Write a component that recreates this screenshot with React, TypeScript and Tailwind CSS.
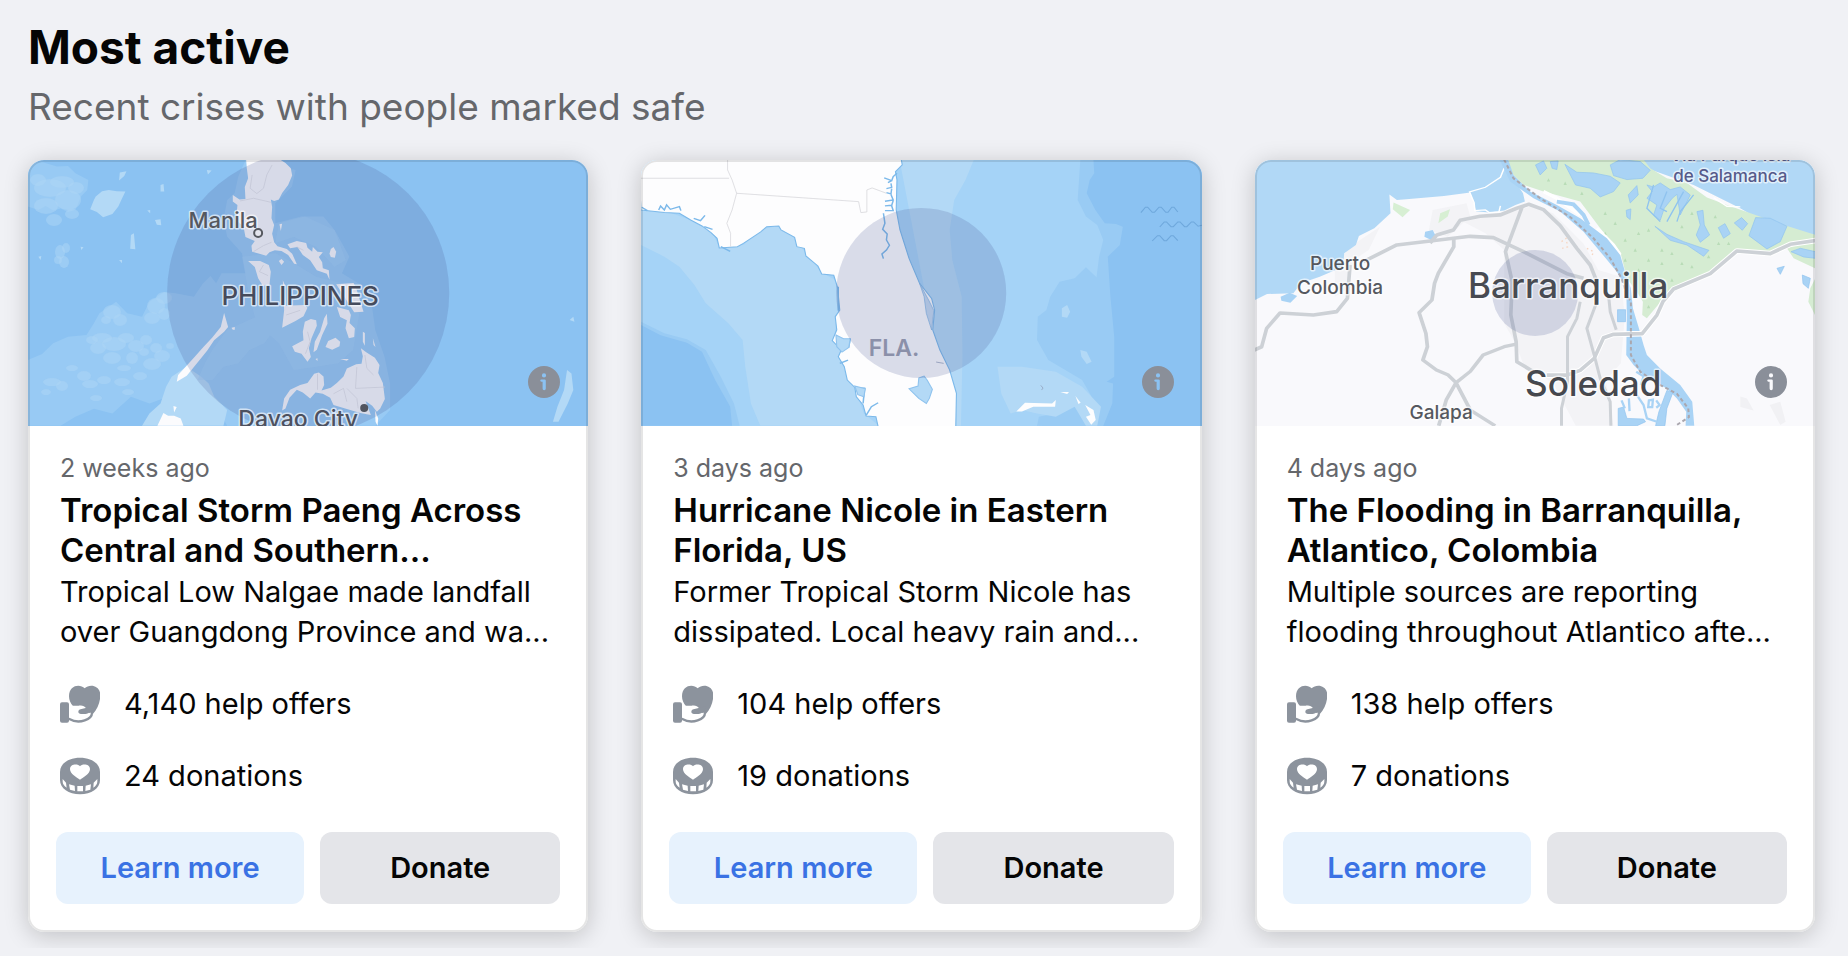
import type { ReactNode } from "react";

const labelFont = "Inter, 'Noto Sans', sans-serif";

type MapLabelProps = {
  x: number;
  y: number;
  size: number;
  fill?: string;
  halo?: string;
  weight?: number;
  children: string;
};

function MapLabel({ x, y, size, fill = "#55585f", halo = "#ffffffa0", weight = 500, children }: MapLabelProps) {
  return (
    <text
      x={x}
      y={y}
      fontSize={size}
      fontFamily={labelFont}
      fontWeight={weight}
      fill={fill}
      stroke={halo}
      strokeWidth={3}
      strokeLinejoin="round"
      paintOrder="stroke"
      textAnchor="middle"
    >
      {children}
    </text>
  );
}

function AffectedArea({ r }: { r: number }) {
  return <circle cx={280} cy={133} r={r} fill="#4c5b98" fillOpacity={0.2} />;
}

function MapFrame({ title, children }: { title: string; children: ReactNode }) {
  return (
    <svg
      viewBox="0 0 560 266"
      preserveAspectRatio="xMidYMid slice"
      className="block h-full w-full"
      role="img"
      aria-label={title}
    >
      {children}
    </svg>
  );
}

// reefs and shoals: x, y, rx, ry
const shoals = [
  [22, 28, 16, 9], [40, 40, 13, 10], [18, 46, 12, 8], [34, 22, 12, 6], [48, 28, 8, 6], [10, 20, 8, 6], [26, 60, 8, 6], [44, 54, 7, 5],
  [32, 92, 5, 7], [36, 102, 5, 6], [30, 100, 4, 4], [38, 88, 4, 5],
  [84, 152, 9, 7], [92, 160, 7, 6], [78, 160, 5, 4], [74, 178, 10, 5], [86, 184, 12, 7], [70, 188, 8, 6], [98, 178, 8, 5],
  [84, 198, 9, 6], [108, 186, 8, 6], [104, 198, 6, 6], [118, 180, 6, 5], [116, 192, 5, 4], [96, 208, 7, 3], [64, 180, 6, 4],
  [128, 146, 9, 8], [136, 138, 8, 6], [124, 158, 8, 6], [136, 154, 6, 6], [128, 188, 6, 5], [134, 196, 8, 6], [124, 204, 9, 6],
  [24, 222, 9, 4], [34, 226, 6, 5], [18, 232, 5, 3], [56, 216, 7, 5], [62, 224, 8, 4], [76, 220, 7, 4], [94, 222, 8, 4], [44, 208, 6, 3],
  [100, 232, 6, 3], [68, 238, 6, 3], [112, 216, 7, 4], [142, 186, 4, 3],
];

function PhilippinesMap() {
  return (
    <MapFrame title="Map of the Philippines">
      <rect width="560" height="266" fill="#8bc2f2" />
      {/* shallow water */}
      <g transform="scale(0.37 0.33333) translate(-22 -30)">
        <path
          fill="#98caf4"
          d="M22 40 L60 36 L100 50 L130 48 L150 70 L185 90 L182 120 L165 140 L158 160 L150 180 L130 186 L110 176 L90 182 L70 168 L50 180 L22 170Z M22 630 L60 612 L90 580 L130 560 L180 555 L200 520 L215 490 L260 455 L290 490 L330 500 L350 455 L370 440 L390 426 L420 430 L470 440 L495 400 L515 378 L530 400 L545 370 L610 370 L600 310 L560 260 L550 210 L560 150 L580 130 L590 80 L610 30 L745 60 L735 110 L690 160 L690 220 L760 200 L820 200 L850 240 L870 280 L890 320 L870 370 L930 410 L950 460 L960 540 L985 620 L1000 700 L1000 780 L960 827 L560 827 L500 700 L440 690 L420 720 L400 740 L350 760 L300 740 L250 790 L200 776 L150 800 L110 827 L22 827Z"
        />
        <path
          fill="#b3d9f6"
          d="M190 178 L200 150 L205 140 L222 124 L240 120 L262 124 L285 125 L275 148 L266 170 L250 192 L225 202 L208 186Z M330 827 L350 790 L380 760 L395 710 L410 680 L450 650 L490 680 L510 700 L525 740 L560 780 L550 827Z M1440 815 L1452 770 L1470 720 L1478 660 L1490 670 L1495 720 L1480 760 L1455 815Z M1485 510 L1495 500 L1498 515Z M505 60 L518 62 L508 74Z M380 105 L388 102 L390 125 L380 125Z M270 68 L288 64 L282 78 L268 92Z M365 210 L380 208 L382 226 L370 224Z M300 255 L308 250 L312 298 L298 296Z M50 320 L58 318 L56 330Z M164 290 L172 292 L166 300Z M344 182 L352 180 L352 190Z M268 330 L276 330 L276 340Z"
        />
        <path
          fill="#a3d0f5"
          fillOpacity="0.55"
          d="M480 690 L500 640 L520 600 L560 540 L600 520 L640 500 L690 510 L680 550 L660 580 L620 600 L590 640 L550 650 L520 690Z M690 280 L700 220 L770 200 L850 240 L880 330 L850 350 L800 290 L740 260Z M600 320 L690 310 L740 340 L800 380 L870 400 L920 470 L900 600 L860 640 L800 650 L740 660 L700 580 L640 520 L620 440Z"
        />
      </g>
      <g fill="#aed6f6" fillOpacity="0.5">
        {shoals.map(([cx, cy, rx, ry]) => (
          <ellipse key={`${cx}-${cy}`} cx={cx} cy={cy} rx={rx} ry={ry} />
        ))}
      </g>
      {/* islands */}
      <g transform="translate(172 -5) scale(0.33333)">
        <g fill="#fbfbfd">
          <path d="M138 14 L240 14 L256 24 L272 40 L276 62 L264 90 L246 114 L236 134 L222 138 L212 134 L216 156 L214 190 L222 210 L216 236 L222 262 L232 274 L260 282 L276 296 L290 328 L282 326 L264 300 L244 288 L224 286 L208 292 L198 302 L178 296 L156 290 L154 272 L164 258 L136 246 L130 214 L108 196 L112 150 L98 140 L98 120 L118 134 L136 132 L134 96 L144 70 L140 40Z" />
          <path d="M262 268 L290 258 L318 264 L322 278 L336 290 L338 276 L352 290 L368 292 L356 306 L366 322 L368 340 L386 346 L388 374 L380 356 L350 346 L330 316 L308 300 L292 276 L270 280Z" />
          <path d="M392 282 L400 276 L408 290 L404 308 L392 306 L388 296Z" />
          <path d="M144 318 L180 318 L206 330 L212 350 L208 390 L188 392 L174 370 L164 336Z" />
          <path d="M236 318 L244 312 L252 320 L244 330Z M238 208 L246 206 L242 228Z" />
          <path d="M248 376 L254 390 L256 452 L312 450 L322 458 L310 484 L286 498 L246 518 L252 466Z" />
          <path d="M408 388 L460 384 L468 400 L490 470 L462 472 L448 450 L416 400Z" />
          <path d="M410 456 L446 466 L452 480 L448 504 L464 520 L462 546 L446 550 L436 520 L440 496 L420 486Z" />
          <path d="M314 500 L332 492 L348 496 L350 512 L334 550 L326 580 L332 606 L322 620 L304 596 L284 590 L276 574 L310 556 L308 530Z" />
          <path d="M380 476 L382 506 L366 540 L350 584 L340 592 L344 560 L360 530 L372 490Z" />
          <path d="M376 576 L384 558 L406 548 L420 560 L418 574 L396 584Z" />
          <path d="M488 530 L494 534 L494 572 L488 560Z M518 550 L526 576 L520 570Z M346 612 L352 610 L352 618Z M420 612 L446 612 L440 617Z M94 518 L104 516 L104 524 L98 524Z" />
          <path d="M72 474 L84 516 L72 530 L42 556 L22 586 L4 608 L-40 662 L-70 680 L-66 660 L-20 610 L10 576 L36 548 L62 516Z" />
          <path d="M482 580 L498 592 L524 608 L538 630 L534 654 L548 684 L554 732 L540 760 L530 770 L516 752 L496 738 L512 780 L480 774 L400 750 L390 728 L368 716 L346 712 L330 730 L308 712 L290 704 L268 728 L256 760 L246 766 L252 730 L270 704 L300 690 L322 684 L342 656 L356 652 L370 664 L372 690 L364 706 L392 698 L410 684 L430 664 L440 640 L468 628 L484 626 L488 604Z" />
          <path d="M524 765 L534 790 L532 812 L526 800Z M-80 753 L-70 756 L-78 772Z" />
          <path d="M-128 812 L-110 774 L-96 782 L-78 782 L-58 790 L-50 812Z" />
        </g>
        <g fill="none" stroke="#dcdde2" strokeWidth="2">
          <path d="M156 60 L150 100 L170 116 L190 100 L200 60 L216 30 M120 138 L160 130 L212 142 M160 290 L190 272 L214 262 M190 330 L178 350 L204 362 M258 480 L300 466 M316 596 L330 560 L322 530 M352 656 L352 704 M470 636 L466 700 L554 696 M440 700 L470 730 L474 760 M400 716 L430 700 L440 740 M290 276 L310 286 M494 600 L500 640 L520 660" />
        </g>
      </g>
      <AffectedArea r={141} />
      <MapLabel x={195} y={68} size={22}>Manila</MapLabel>
      <circle cx={230} cy={73} r={4} fill="#e4e5ee" stroke="#55585f" strokeWidth={2} />
      <MapLabel x={272} y={145} size={26} fill="#464b5c">PHILIPPINES</MapLabel>
      <MapLabel x={270} y={267} size={23} fill="#4d515f">Davao City</MapLabel>
      <circle cx={336} cy={248} r={4} fill="#50545f" />
    </MapFrame>
  );
}

function FloridaMap() {
  return (
    <MapFrame title="Map of Florida">
      <rect width="560" height="266" fill="#a5d3f7" />
      <g transform="scale(0.37622 0.33333) translate(-28 -30)">
        {/* deep water on the east */}
        <path
          fill="#99cbf4"
          d="M1195 30 L1520 30 L1520 830 L1160 830 L1080 827 L1085 800 L1130 790 L1100 760 L1180 720 L1225 740 L1200 690 L1110 630 L1080 570 L1082 500 L1105 480 L1115 440 L1140 395 L1180 385 L1210 352 L1238 382 L1245 320 L1256 270 L1240 225 L1210 200 L1188 150Z"
        />
        <path
          fill="#8bc2f2"
          d="M1230 30 L1520 30 L1520 830 L1255 830 L1280 760 L1282 700 L1265 695 L1285 680 L1285 560 L1275 440 L1268 320 L1300 285 L1308 230 L1290 222 L1260 220 L1235 180 L1212 130 L1220 90 L1232 70Z"
        />
        <path
          fill="#b3d9f6"
          d="M715 30 L912 30 L890 90 L860 150 L848 240 L855 330 L880 440 L882 620 L878 827 L850 827Z"
        />
        <path
          fill="#b3d9f6"
          d="M975 650 L1040 650 L1130 665 L1200 710 L1250 770 L1240 827 L1210 827 L1180 770 L1130 800 L1080 790 L1040 780 L1010 790 L985 730Z M1146 475 L1160 465 L1168 485 L1160 503 L1146 500Z M1195 600 L1212 605 L1225 635 L1212 642 L1198 620Z"
        />
        {/* gulf */}
        <path
          fill="#b3d9f6"
          d="M28 180 L100 186 L160 210 L215 240 L235 290 L300 285 L345 240 L400 225 L435 260 L465 310 L510 370 L545 390 L552 500 L540 560 L575 650 L620 790 L660 827 L28 827Z"
        />
        <path
          fill="#a5d3f7"
          d="M28 285 L90 320 L130 350 L170 405 L200 460 L260 520 L298 570 L305 650 L320 760 L345 827 L28 827Z"
        />
        <path fill="#99cbf4" d="M28 515 L90 550 L150 568 L200 600 L240 680 L275 760 L290 827 L28 827Z" />
        <path fill="#8bc2f2" d="M28 525 L80 556 L150 578 L190 605 L225 690 L265 770 L270 827 L28 827Z" />
        {/* land */}
        <path
          fill="#fdfdfe"
          stroke="#7cb9ea"
          strokeWidth="3"
          d="M20 20 L718 20 L722 45 L704 65 L708 90 L706 180 L716 240 L740 325 L768 400 L800 445 L808 480 L803 540 L822 600 L848 660 L866 730 L864 840 L660 840 L652 800 L626 798 L618 765 L600 740 L596 712 L576 690 L568 650 L552 620 L560 600 L536 572 L548 540 L544 500 L556 480 L550 412 L540 376 L508 372 L498 348 L466 318 L462 295 L442 290 L436 262 L400 240 L394 228 L362 230 L346 246 L300 280 L284 290 L236 294 L230 265 L214 248 L190 228 L160 210 L130 190 L90 188 L28 180Z"
        />
        <g fill="none" stroke="#7cb9ea" strokeWidth="4">
          <path d="M30 172 L45 182 M75 180 L80 168 L90 180 L96 165 L106 178 L130 170 L134 182 M168 205 L186 212 L198 196 M196 230 L218 238 M240 290 L265 304" />
          <path d="M708 70 L698 80 L694 92 L674 84 M694 92 L684 98 M692 100 L694 112 L680 116 M694 116 L692 132 L680 128 M692 134 L698 150 L676 154 M698 152 L694 166 L676 168 M694 168 L698 182 L676 182" />
          <path d="M672 190 L676 220 L670 238 L682 252 L680 270 L688 286 L680 300 L668 312 L672 326" />
          <path d="M552 410 L552 482 M560 600 L552 576 L580 590 L584 566 M556 640 L578 630 M598 714 L622 714 L618 760 M626 796 L640 770 L658 758" />
        </g>
        <path fill="#b3d9f6" stroke="#8fc3ee" strokeWidth="3" d="M546 555 L566 566 L584 566 L580 592 L562 606 L548 590Z M596 708 L624 716 L620 740 L604 734Z M766 684 L780 678 L788 690 L802 718 L794 745 L786 760 L766 745 L740 716 L764 708Z" />
        <path fill="#c5daf0" stroke="#82b6e4" strokeWidth="2" d="M768 400 L780 440 L786 490 L800 540 L806 482 L792 450Z" />
        <path fill="#fdfdfe" d="M1025 784 L1048 758 L1120 760 L1130 750 L1128 770 L1070 770 L1040 784Z M1142 726 L1165 726 L1160 732Z M1182 738 L1196 758 L1190 762Z M1208 765 L1230 780 L1236 810 L1224 824 L1210 800 L1222 795Z" />
        {/* state lines */}
        <g fill="none" stroke="#d3d3d8" strokeWidth="2">
          <path d="M28 85 L262 85 M258 30 L258 60 L270 90 L282 130 L606 155 L612 188 L628 186 L628 120 L642 114 L680 130 M282 130 L270 180 L256 220 L266 250 L266 290" />
          <path d="M812 636 L832 640 M1090 706 L1096 714 L1092 720" stroke="#8d9bb5" />
        </g>
        {/* waves */}
        <g fill="none" stroke="#6fa8dc" strokeWidth="3">
          <path d="M1356 188 L1368 172 L1374 172 L1386 187 L1392 187 L1404 172 L1410 172 L1422 187 L1428 187 L1438 172 L1444 172 L1454 186" />
          <path d="M1406 231 L1418 216 L1424 216 L1436 230 L1442 230 L1454 216 L1460 216 L1472 230 L1478 230 L1490 216 L1496 216 L1508 229 L1518 226" />
          <path d="M1386 273 L1400 257 L1406 257 L1418 272 L1424 272 L1436 257 L1442 257 L1454 272" />
        </g>
      </g>
      <AffectedArea r={85} />
      <MapLabel x={253} y={196} size={23} fill="#8b90a9" halo="none" weight={600}>FLA.</MapLabel>
    </MapFrame>
  );
}

function BarranquillaMap() {
  return (
    <MapFrame title="Map of Barranquilla">
      <rect width="560" height="266" fill="#f9f9fc" />
      <g transform="scale(0.37622 0.33333) translate(-28 -30)">
        {/* urban area */}
        <path
          fill="#f3f3f6"
          d="M580 215 L700 190 L760 170 L820 190 L900 280 L940 360 L1000 380 L1010 500 L1000 640 L960 690 L980 827 L880 827 L820 700 L740 640 L720 580 L690 520 L690 300 L640 250Z M280 290 L360 230 L330 300 L290 330 L270 420 L240 440 L240 350Z M500 180 L590 160 L600 200 L540 260 L490 240Z"
        />
        {/* sea */}
        <path
          fill="#b1d8f6"
          d="M28 30 L690 30 L700 60 L740 130 L745 155 L720 165 L690 182 L650 188 L615 184 L610 160 L600 128 L530 138 L430 148 L405 150 L385 134 L388 190 L345 235 L304 258 L296 285 L265 310 L262 350 L200 380 L150 400 L130 430 L60 432 L28 450Z"
        />
        <path fill="none" stroke="#fff" strokeWidth="4" d="M690 54 L680 82 L640 112 L598 126 L610 158 L612 182 L640 180 L650 188 L676 186 L680 168" />
        <path fill="#a9d3f5" d="M96 440 L120 428 L140 438 L122 458 L98 452Z M480 245 L500 240 L510 262 L496 270 L478 260Z" />
        <path fill="#d7efd3" d="M396 158 L440 180 L420 202 L394 178Z M520 190 L546 178 L540 200 L515 220Z" />
      </g>
      <g transform="translate(225 -5) scale(0.33333)">
        {/* coast and park */}
        <path fill="#b1d8f6" d="M60 14 L1005 14 L1005 240 L900 230 L780 160 L640 90 L500 40 L300 14Z" />
        <path
          fill="#d5ecd2"
          d="M84 14 L490 14 L510 40 L560 70 L620 84 L680 128 L740 150 L830 182 L880 200 L930 216 L1005 240 L1005 250 L920 275 L870 296 L770 290 L700 350 L600 400 L550 430 L500 490 L486 480 L488 440 L470 410 L440 370 L420 290 L360 220 L300 140 L190 110 L130 90 L90 50Z"
        />
        <path fill="#d5ecd2" d="M920 280 L1005 252 L1005 340 L940 310Z M990 400 L1005 370 L1005 482 L984 440Z" />
        <g fill="#a9d3f5" stroke="#8fc3ef" strokeWidth="2">
          <path d="M254 28 L290 52 L340 54 L390 64 L420 84 L400 110 L360 126 L330 100 L286 90Z" />
          <path d="M390 30 L420 14 L480 20 L510 46 L488 70 L440 74 L400 62Z" />
          <path d="M166 30 L190 18 L200 40 L180 60Z M210 20 L234 18 L230 44 L216 40Z M444 120 L470 92 L474 120 L450 144Z M438 166 L452 162 L450 194 L440 186Z" />
          <path d="M500 90 L516 110 L500 130 L530 150 L520 180 L540 196 L552 160 L576 130 L590 118 L600 180 L630 120 L600 96 L570 104 L540 84 L520 96Z" />
          <path d="M650 170 L668 166 L672 210 L688 240 L660 262 L648 240 L660 210Z M714 218 L734 206 L750 236 L730 250Z M762 204 L784 188 L802 206 L786 226Z" />
          <path d="M826 188 L870 190 L920 214 L900 260 L860 282 L806 242Z M524 214 L560 238 L610 260 L686 286 L670 304 L620 270 L570 256Z" />
          <path d="M932 290 L960 280 L1005 290 L1005 310 L970 306Z M890 340 L912 334 L900 358Z M966 360 L990 370 L984 400 L968 386Z" />
        </g>
        <g fill="none" stroke="#8fc3ef" strokeWidth="4">
          <path d="M520 90 L500 160 L540 200 M560 110 L540 160 L560 170 M610 110 L560 200 M640 120 L600 170 L590 200" />
          <path d="M700 128 L740 154 L780 156" stroke="#fff" />
        </g>
        <g fill="#b9dcb7">
          <path d="M300 120h10l-5 -10z M370 180h10l-5 -10z M400 210h10l-5 -10z M370 240h10l-5 -10z M430 260h10l-5 -10z M460 290h10l-5 -10z M430 320h10l-5 -10z M500 320h10l-5 -10z M540 330h10l-5 -10z M570 300h10l-5 -10z M600 330h10l-5 -10z M630 340h10l-5 -10z M470 240h10l-5 -10z M500 230h10l-5 -10z M540 290h10l-5 -10z M600 220h10l-5 -10z M630 180h10l-5 -10z M700 190h10l-5 -10z M710 270h10l-5 -10z M740 270h10l-5 -10z M510 390h10l-5 -10z M570 380h10l-5 -10z M500 460h10l-5 -10z M250 90h10l-5 -10z M200 80h10l-5 -10z M470 350h10l-5 -10z M680 310h10l-5 -10z" />
        </g>
        {/* river */}
        <path
          fill="none"
          stroke="#fff"
          strokeWidth="10"
          d="M190 110 L230 130 L300 180 M350 220 L400 270 L420 300"
        />
        <path
          fill="#a9d3f5"
          d="M58 14 L84 14 L100 60 L150 110 L230 150 L300 190 L380 250 L420 300 L440 370 L452 400 L458 460 L476 520 L490 570 L500 600 L540 640 L600 690 L636 740 L642 812 L616 812 L618 770 L590 730 L560 700 L500 670 L460 630 L438 600 L440 480 L438 400 L410 350 L360 290 L310 230 L240 170 L160 130 L90 80Z"
        />
        <path fill="none" stroke="#a9d3f5" strokeWidth="12" d="M230 140 L280 148 L310 180 L325 210" />
        <path fill="#a9d3f5" stroke="#8fc3ef" strokeWidth="2" d="M412 464 L436 464 L436 500 L412 500Z M560 706 L578 712 L560 760 L554 812 L526 812 L536 770Z M414 760 L430 756 L440 790 L490 792 L496 800 L470 812 L414 812Z" />
        <path fill="none" stroke="#a9d3f5" strokeWidth="7" d="M424 736 L434 760 M446 730 L448 768 M468 650 L490 664 L482 690 M470 720 L490 750 L500 790 L530 800 M506 736 L518 734 L516 756 L504 756Z M528 736 L538 750 L528 758" />
        {/* roads */}
        <g fill="none" stroke="#fff" strokeWidth="17" strokeLinejoin="round">
          <path d="M1010 256 L930 268 L870 296 L770 288 L690 356 L580 402 L548 440 L530 480 L486 536 L400 538 L370 548 L342 610 L300 646 L262 660 L200 660" />
        </g>
        <g fill="none" stroke="#cdd1d6" strokeWidth="11" strokeLinejoin="round">
          <path d="M1010 256 L930 268 L870 296 L770 288 L690 356 L580 402 L548 440 L530 480 L486 536 L400 538 L370 548 L342 610 L300 646 L262 660 L200 660" />
          <path d="M-150 264 L-130 240 L-80 225 L-60 196 L0 184 L60 180 L110 160 L146 148 L190 164 L240 212 L290 280 L330 330 L350 380 M126 156 L76 290 L96 380 L92 480 L108 560 L110 620 L160 650" />
          <path d="M-680 586 L-655 575 L-640 520 L-600 474 L-500 480 L-430 470 L-398 430 L-390 330 M-350 320 L-250 270 L-30 244 L40 248 L130 290 L260 356 L310 370" />
          <path d="M350 440 L320 520 L342 600 L360 670 L390 740 L392 812 M300 440 L290 490 L262 545 L262 680 L244 760 L244 812 M385 420 L390 470 L408 524" strokeWidth="9" />
        </g>
        <path fill="none" stroke="#aaa7ae" strokeWidth="6" strokeDasharray="11 8" d="M72 14 L100 70 L180 130 L270 186 L340 250 L390 310 L424 370 L440 420 L452 440 L452 600 L480 650 L540 690 L590 716 L624 760 L626 786 L586 812" />
        <path fill="none" stroke="#f6d7c4" strokeWidth="4" strokeDasharray="5 9" d="M244 260 L258 250 L262 276 L246 280 M320 280 L340 290 L336 300" />
        <path fill="#f1f1f4" d="M780 724 L800 730 L820 766 L780 756Z M868 750 L900 740 L916 800 L900 810Z" />
      </g>
      <g transform="scale(0.37622 0.33333) translate(-28 -30)">
        <path
          fill="none"
          stroke="#cdd1d6"
          strokeWidth="10"
          strokeLinejoin="round"
          d="M556 262 L556 290 L515 370 L505 400 L498 450 L464 488 L482 550 L486 590 L474 630 L510 660 L540 674 L562 698 L600 664 L634 615 L690 590 L722 582 M562 698 L536 750 L516 827 M562 698 L600 780 L666 827"
        />
      </g>
      <AffectedArea r={43} />
      <MapLabel x={475} y={1} size={17} fill="#565a8a">Vía Parque Isla</MapLabel>
      <MapLabel x={475} y={22} size={17} fill="#565a8a">de Salamanca</MapLabel>
      <MapLabel x={85} y={110} size={19}>Puerto</MapLabel>
      <MapLabel x={85} y={134} size={19}>Colombia</MapLabel>
      <MapLabel x={313} y={138} size={35} fill="#484b52">Barranquilla</MapLabel>
      <MapLabel x={338} y={236} size={35} fill="#46484e">Soledad</MapLabel>
      <MapLabel x={186} y={259} size={19}>Galapa</MapLabel>
    </MapFrame>
  );
}

function InfoIcon() {
  return (
    <svg viewBox="0 0 32 32" className="h-8 w-8" aria-hidden="true">
      <path
        fill="#8a8f99"
        fillRule="evenodd"
        d="M16 0a16 16 0 1 1 0 32a16 16 0 0 1 0-32Z M16 7.3a2.1 2.1 0 1 0 0 4.2a2.1 2.1 0 0 0 0-4.2Z M13.4 13.4a1 1 0 0 0 0 2.3H14.6V22.6a1.6 1.6 0 0 0 3.2 0V14.6a1.2 1.2 0 0 0-1.2-1.2Z"
      />
    </svg>
  );
}

function HelpIcon() {
  return (
    <svg viewBox="30 43 120 120" className="h-10 w-10 shrink-0" fill="#8c939d" aria-hidden="true">
      <path d="M104 56 C90 42 57 46 57 80 C57 92 62 101 68 108 L128 134 C144 118 151 94 151 76 C150 46 118 42 104 56Z" />
      <path fill="#fff" d="M60 110 C68 107 78 109 86 108 C98 107 108 112 108 118 C104 121 92 118 86 124 C83 130 90 134 98 134 C108 135 116 134 124 128 C122 142 108 150 92 150 C78 151 68 148 60 145Z" />
      <path d="M104 116 C96 119 86 118 85 126 C85 134 98 133 106 133 C118 132 126 124 128 110Z" />
      <path fill="none" stroke="#8c939d" strokeWidth="7" strokeLinecap="round" d="M58 148 C72 156 90 157 104 152 C116 148 126 140 126 129" />
      <rect x="30" y="98" width="27" height="61" rx="6" />
    </svg>
  );
}

function DonationIcon() {
  return (
    <svg viewBox="30 258 120 120" className="h-10 w-10 shrink-0" fill="#8c939d" aria-hidden="true">
      <path d="M90 263 C124 263 150 280 150 306 L150 330 C150 355 124 373 90 373 C56 373 30 355 30 330 L30 306 C30 280 56 263 90 263Z" />
      <path fill="#fff" d="M90 289 C84 281 60 281 60 298 C60 311 80 323 90 329 C100 323 120 311 120 298 C120 281 96 281 90 289Z" />
      <path fill="#fff" d="M38 327 L48 338 L50 353 C43 348 38 342 38 335Z M57 343 L74 347 L75 363 L60 359Z M82 348 H99 V364 H82Z M107 347 L123 343 L121 359 L106 363Z M131 338 L142 327 L142 335 C142 342 137 348 130 353Z" />
    </svg>
  );
}

const crises = [
  {
    id: "paeng",
    map: <PhilippinesMap />,
    time: "2 weeks ago",
    title: "Tropical Storm Paeng Across Central and Southern...",
    description: "Tropical Low Nalgae made landfall over Guangdong Province and wa...",
    offers: "4,140 help offers",
    donations: "24 donations",
  },
  {
    id: "nicole",
    map: <FloridaMap />,
    time: "3 days ago",
    title: "Hurricane Nicole in Eastern Florida, US",
    description: "Former Tropical Storm Nicole has dissipated. Local heavy rain and...",
    offers: "104 help offers",
    donations: "19 donations",
  },
  {
    id: "barranquilla",
    map: <BarranquillaMap />,
    time: "4 days ago",
    title: "The Flooding in Barranquilla, Atlantico, Colombia",
    description: "Multiple sources are reporting flooding throughout Atlantico afte...",
    offers: "138 help offers",
    donations: "7 donations",
  },
];

function CrisisCard({ crisis }: { crisis: (typeof crises)[number] }) {
  return (
    <article className="relative overflow-hidden rounded-2xl bg-white shadow-[0_4px_24px_rgba(0,0,0,0.2)]">
      <div className="relative h-[266px]">
        {crisis.map}
        <button type="button" aria-label="Map information" className="absolute right-7 bottom-7">
          <InfoIcon />
        </button>
      </div>

      <div className="px-7 pt-[26px] pb-7">
        <div className="px-1">
          <p className="text-[25px] leading-8 text-[#65676b]">{crisis.time}</p>
          <h2 className="mt-1.5 text-[33px] leading-10 font-semibold">{crisis.title}</h2>
          <p className="mt-0.5 text-[29px] leading-10">{crisis.description}</p>

          <ul className="mt-8 flex flex-col gap-8 text-[29px] leading-10">
            <li className="flex items-center gap-6">
              <HelpIcon />
              {crisis.offers}
            </li>
            <li className="flex items-center gap-6">
              <DonationIcon />
              {crisis.donations}
            </li>
          </ul>
        </div>

        <div className="mt-9 grid grid-cols-[31fr_30fr] gap-4 text-[29px] font-semibold">
          <button type="button" className="h-[72px] rounded-xl bg-[#e7f2fd] text-[#3a72e4]">
            Learn more
          </button>
          <button type="button" className="h-[72px] rounded-xl bg-[#e4e5e9]">
            Donate
          </button>
        </div>
      </div>

      {/* hairline on top of the map */}
      <div className="pointer-events-none absolute inset-0 rounded-2xl border-2 border-black/10" />
    </article>
  );
}

export default function App() {
  return (
    <main className="min-h-screen bg-[#f0f1f5] font-[Inter,'Noto_Sans',sans-serif] text-[#050505]">
      <section className="overflow-hidden pt-[19px] pr-[33px] pb-4 pl-7">
        <h1 className="text-[46px] leading-14 font-bold">Most active</h1>
        <p className="mt-2 text-[37px] leading-12 text-[#65676b]">
          Recent crises with people marked safe
        </p>

        <div className="mt-[29px] grid grid-cols-3 gap-[53px]">
          {crises.map((crisis) => (
            <CrisisCard key={crisis.id} crisis={crisis} />
          ))}
        </div>
      </section>
    </main>
  );
}
